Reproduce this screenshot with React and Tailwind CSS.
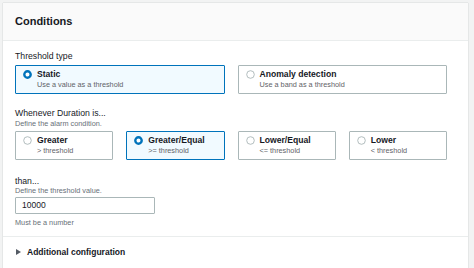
const font = "font-['Liberation_Sans',Arial,sans-serif]";

function Radio({ checked }) {
  return (
    <svg width="9" height="9" viewBox="0 0 9 9" className="shrink-0 mt-[1px]">
      {checked ? (
        <circle cx="4.5" cy="4.5" r="3.2" fill="#fff" stroke="#0073bb" strokeWidth="2.4" />
      ) : (
        <circle cx="4.5" cy="4.5" r="3.8" fill="#fff" stroke="#aab7b8" strokeWidth="0.9" />
      )}
    </svg>
  );
}

function Tile({ title, desc, checked }) {
  return (
    <div
      className={`h-[29px] border rounded-[1px] pl-[7px] pt-[3px] flex gap-[5px] ${
        checked ? "border-[#0073bb] bg-[#f1faff]" : "border-[#aab7b8] bg-white"
      }`}
    >
      <div className="h-[10px] flex items-center">
        <Radio checked={checked} />
      </div>
      <div className="flex flex-col">
        <span className="text-[8.6px] leading-[10px] font-bold text-[#16191f]">{title}</span>
        <span className="text-[7.3px] leading-[11px] text-[#5f6368]">{desc}</span>
      </div>
    </div>
  );
}

export default function App() {
  const thresholdTypes = [
    { title: "Static", desc: "Use a value as a threshold", checked: true },
    { title: "Anomaly detection", desc: "Use a band as a threshold", checked: false },
  ];
  const conditions = [
    { title: "Greater", desc: "> threshold", checked: false },
    { title: "Greater/Equal", desc: ">= threshold", checked: true },
    { title: "Lower/Equal", desc: "<= threshold", checked: false },
    { title: "Lower", desc: "< threshold", checked: false },
  ];

  return (
    <div className={`w-[474px] h-[268px] overflow-hidden bg-[#f2f3f3] pt-[3px] pl-[3px] pr-[6px] ${font}`}>
      <div className="bg-white h-[300px] shadow-[0_0_1px_rgba(0,28,36,0.3)]">
        {/* header */}
        <div className="h-[38px] bg-[#fafafa] border-b border-[#eaeded] px-[12px] flex items-center">
          <h2 className="text-[11px] font-bold text-[#16191f]">Conditions</h2>
        </div>

        <div className="px-[12px] w-[456px]">
          <div className="mt-[10px] text-[8.7px] leading-[11px] text-[#16191f]">Threshold type</div>
          <div className="mt-[3px] grid grid-cols-2 gap-[13px]">
            {thresholdTypes.map((t) => (
              <Tile key={t.title} {...t} />
            ))}
          </div>

          <div className="mt-[14px] text-[8.7px] leading-[10px] text-[#16191f]">Whenever Duration is...</div>
          <div className="mt-[1px] text-[7.3px] leading-[10px] text-[#687078]">Define the alarm condition.</div>
          <div className="mt-[2px] grid grid-cols-4 gap-[13px]">
            {conditions.map((c) => (
              <Tile key={c.title} {...c} />
            ))}
          </div>

          <div className="mt-[16px] text-[8.7px] leading-[10px] text-[#16191f]">than...</div>
          <div className="text-[7.3px] leading-[9px] text-[#687078]">Define the threshold value.</div>
          <div className="mt-[2px] w-[140px] h-[17px] border border-[#aab7b8] rounded-[1px] px-[6px] flex items-center text-[8.5px] text-[#16191f]">
            10000
          </div>
          <div className="mt-[4px] text-[7.3px] leading-[10px] text-[#687078]">Must be a number</div>
        </div>

        <div className="mt-[8px] border-t border-[#eaeded]" />

        <div className="mt-[10px] px-[13px] flex items-center gap-[6px] h-[10px]">
          <svg width="5" height="6" viewBox="0 0 5 6">
            <path d="M0 0 L5 3 L0 6 Z" fill="#545b64" />
          </svg>
          <span className="text-[8.5px] font-bold text-[#16191f]">Additional configuration</span>
        </div>
      </div>
    </div>
  );
}
